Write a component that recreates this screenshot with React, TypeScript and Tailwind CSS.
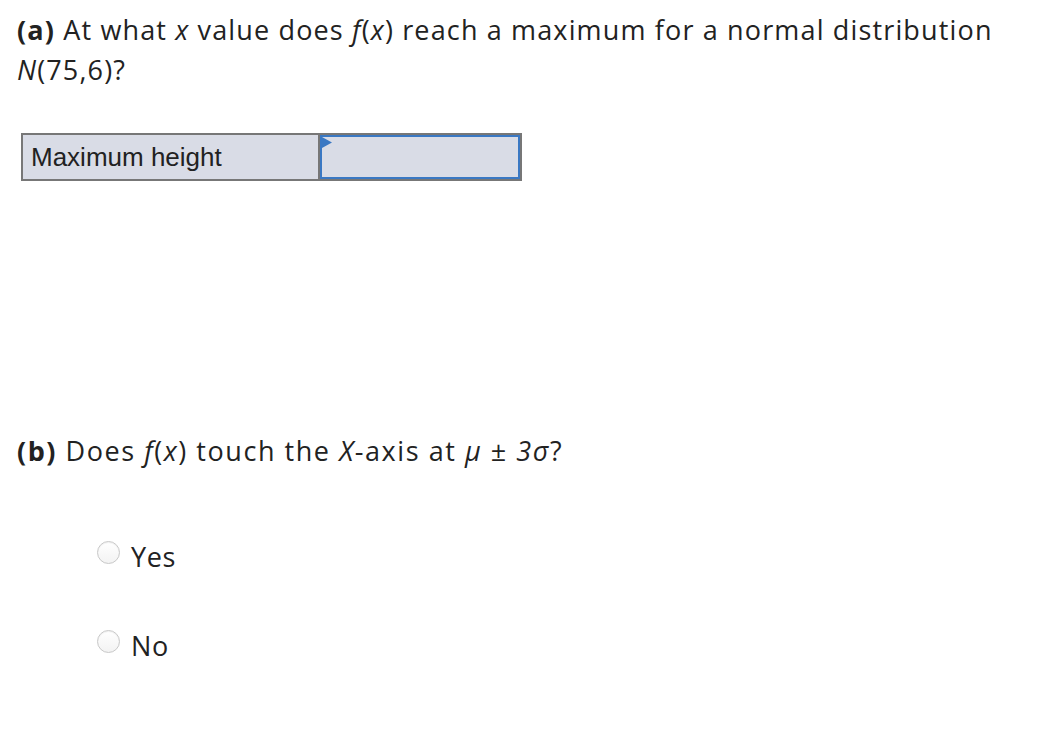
import React from "react";

const Radio = ({ label }: { label: string }) => (
  <label className="flex items-center gap-[11px]">
    <span className="block w-[23px] h-[23px] mb-[8px] rounded-full border border-[#c8c8c8] bg-gradient-to-b from-[#ffffff] to-[#f3f3f3] shadow-[inset_0_1px_1px_rgba(0,0,0,0.06)]" />
    <span className="text-[27px] leading-[30px] tracking-[0.6px] text-[#222]">{label}</span>
  </label>
);

export default function App() {
  return (
    <div
      className="w-[1056px] h-[742px] bg-white text-[#222] pl-[17px] pt-[10px]"
      style={{ fontFamily: '"Open Sans", sans-serif' }}
    >
      <p className="text-[27px] leading-[40px] tracking-[1.15px] m-0">
        <b className="font-bold">(a)</b> At what <i>x</i> value does <i>f</i>(<i>x</i>) reach a maximum for a
        normal distribution
        <br />
        <i>N</i>(75,6)?
      </p>

      <div
        className="mt-[43px] ml-[4px] flex w-[501px] h-[48px] border-2 border-[#777777]"
        style={{ fontFamily: '"Liberation Sans", Arial, sans-serif' }}
      >
        <div className="w-[297px] bg-[#d9dce6] border-r-2 border-[#777777] flex items-center pl-[8px] text-[26px] text-[#222]">
          Maximum height
        </div>
        <div className="relative flex-1 bg-[#d9dce6] border-2 border-[#3a78c3]">
          <svg className="absolute left-0 top-0" width="10" height="11" viewBox="0 0 10 11">
            <polygon points="0,0 10,5.5 0,11" fill="#3a78c3" />
          </svg>
        </div>
      </div>

      <p className="mt-[250px] text-[27px] leading-[40px] tracking-[1.55px] m-0">
        <b className="font-bold">(b)</b> Does <i>f</i>(<i>x</i>) touch the <i>X</i>-axis at <i>μ</i> ± <i>3σ</i>?
      </p>

      <div className="ml-[80px] mt-[70px] flex flex-col gap-[58px]">
        <Radio label="Yes" />
        <Radio label="No" />
      </div>
    </div>
  );
}
